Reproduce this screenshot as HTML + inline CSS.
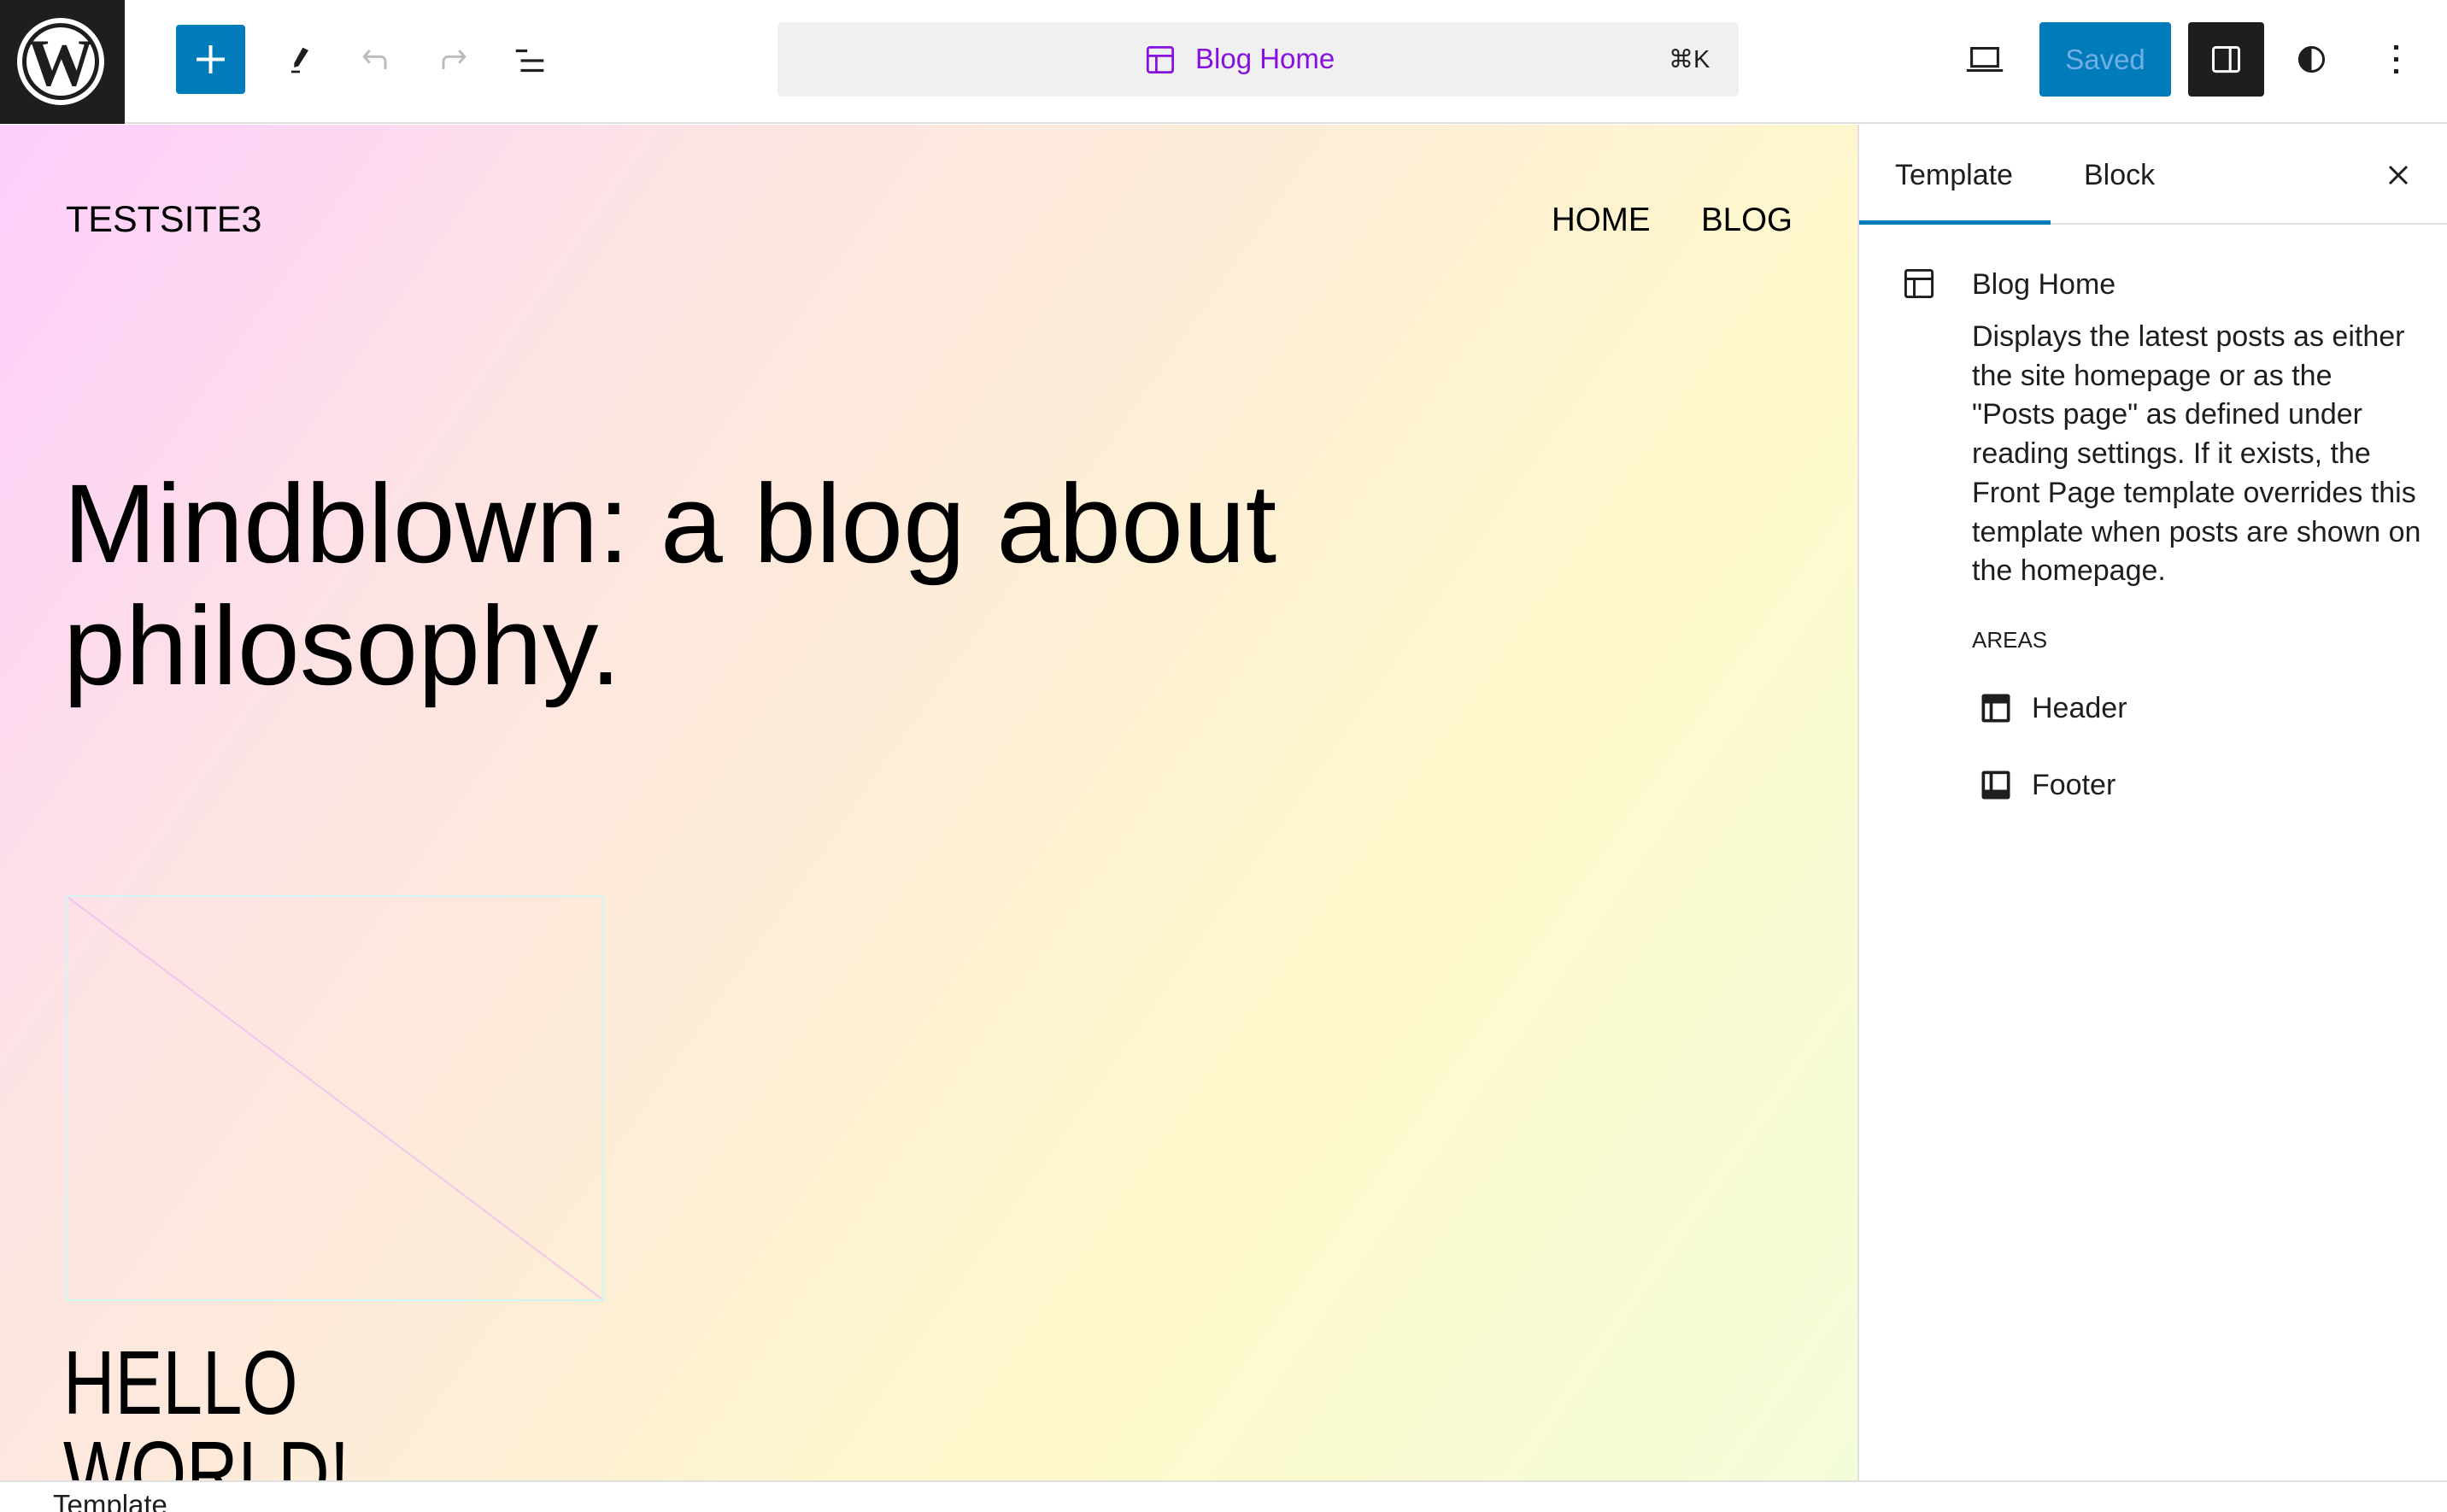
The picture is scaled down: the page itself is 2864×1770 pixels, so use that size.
<!DOCTYPE html>
<html><head><meta charset="utf-8"><style>
*{margin:0;padding:0;box-sizing:border-box}
body{width:2864px;height:1770px;overflow:hidden;background:#fff;font-family:"Liberation Sans",sans-serif;color:#1e1e1e;position:relative}
.abs{position:absolute}
#top{left:0;top:0;width:2864px;height:145px;background:#fff;border-bottom:2px solid #e0e0e0}
#logo{left:0;top:0;width:146px;height:145px;background:#1e1e1e}
#canvas{left:0;top:146px;width:2174px;height:1587px;overflow:hidden;background:linear-gradient(125deg,#fdcdfd 0%,#fde3e4 25%,#fdecd8 45%,#fef9cb 70%,#f3fcd9 100%)}
#side{left:2174px;top:146px;width:690px;height:1587px;background:#fff;border-left:2px solid #e0e0e0}
#bottom{left:0;top:1733px;width:2864px;height:37px;background:#fff;border-top:2px solid #e0e0e0;overflow:hidden}
.d{white-space:nowrap}
</style></head><body>
<div id="top" class="abs"></div>
<div id="logo" class="abs">
<svg width="146" height="145" viewBox="0 0 146 145"><circle cx="71" cy="72" r="48" fill="none" stroke="#fff" stroke-width="6"/><circle cx="71" cy="72" r="40" fill="#fff"/><text x="71" y="100" font-family="Liberation Serif" font-size="78" font-weight="bold" fill="#1e1e1e" text-anchor="middle">W</text></svg>
</div>
<div class="abs" style="left:206px;top:29px;width:81px;height:81px;background:#007cba;border-radius:4px"></div>
<svg class="abs" style="left:206px;top:29px" width="81" height="81"><path d="M40.5 24v33M24 40.5h33" stroke="#fff" stroke-width="4"/></svg>
<svg class="abs" style="left:331px;top:49px" width="40" height="40" viewBox="0 0 24 24"><path d="M14 4l4 2-7 11-3 1 0-3z" fill="#1e1e1e"/><path d="M6 21h6" stroke="#1e1e1e" stroke-width="1.6"/></svg>
<svg class="abs" style="left:418px;top:48px" width="44" height="44" viewBox="0 0 24 24" fill="none" stroke="#bbb" stroke-width="1.6"><path d="M8 6L4.5 10 8 14M4.5 10H15a3 3 0 013 3v5"/></svg>
<svg class="abs" style="left:508px;top:48px" width="44" height="44" viewBox="0 0 24 24" fill="none" stroke="#bbb" stroke-width="1.6"><path d="M16 6l3.5 4L16 14M19.5 10H9a3 3 0 00-3 3v5"/></svg>
<svg class="abs" style="left:598px;top:48px" width="46" height="46" viewBox="0 0 24 24" stroke="#1e1e1e" stroke-width="1.7"><path d="M3 6h7M6 12h14M6 18h14"/></svg>
<div class="abs" style="left:910px;top:26px;width:1125px;height:87px;background:#f0f0f0;border-radius:6px"></div>
<svg class="abs" style="left:1336px;top:48px" width="44" height="44" viewBox="0 0 24 24" fill="none" stroke="#8710e0" stroke-width="1.5"><rect x="4" y="4" width="16" height="16" rx="1.5"/><path d="M4 9.5h16M9.5 9.5V20"/></svg>
<div class="abs" style="left:1399px;top:50px;font-size:33px;color:#8710e0">Blog Home</div>
<div class="abs" style="left:1953px;top:52px;font-size:29px;color:#1e1e1e">⌘K</div>
<svg class="abs" style="left:2298px;top:48px" width="50" height="44" viewBox="0 0 26 22" fill="none" stroke="#1e1e1e" stroke-width="1.6"><rect x="5" y="4" width="16" height="11"/><path d="M2 17.5h22"/></svg>
<div class="abs" style="left:2387px;top:26px;width:154px;height:87px;background:#007cba;border-radius:4px;color:#72aee6;font-size:33px;text-align:center;line-height:87px">Saved</div>
<div class="abs" style="left:2561px;top:26px;width:89px;height:87px;background:#1e1e1e;border-radius:4px"></div>
<svg class="abs" style="left:2583px;top:47px" width="45" height="45" viewBox="0 0 24 24" fill="none" stroke="#fff" stroke-width="1.6"><rect x="4" y="4.5" width="16" height="15" rx="1.5"/><path d="M14.5 4.5v15"/></svg>
<svg class="abs" style="left:2683px;top:47px" width="45" height="45" viewBox="0 0 24 24"><circle cx="12" cy="12" r="7.5" fill="none" stroke="#1e1e1e" stroke-width="1.6"/><path d="M12 4.5a7.5 7.5 0 000 15z" fill="#1e1e1e"/></svg>
<svg class="abs" style="left:2795px;top:47px" width="20" height="45"><rect x="7" y="6" width="5" height="5" fill="#1e1e1e"/><rect x="7" y="20" width="5" height="5" fill="#1e1e1e"/><rect x="7" y="34" width="5" height="5" fill="#1e1e1e"/></svg>

<div id="canvas" class="abs">
<div class="abs" style="left:77px;top:87px;font-size:43px;color:#000">TESTSITE3</div>
<div class="abs" style="left:1816px;top:90px;font-size:38.5px;color:#000">HOME</div>
<div class="abs" style="left:1991px;top:90px;font-size:38.5px;color:#000">BLOG</div>
<div class="abs" style="left:74px;top:395px;font-size:131px;line-height:143px;color:#000;white-space:nowrap">Mindblown: a blog about<br>philosophy.</div>
<div class="abs" style="left:77px;top:902px;width:630px;height:475px;border:2px solid #d2f6f6"><svg width="626" height="471" class="abs" style="left:0;top:0"><path d="M0 0L626 471" stroke="#f3c5ee" stroke-width="2"/></svg></div>
<div class="abs" style="left:74px;top:1420px;font-size:106px;line-height:106px;color:#000;transform:scaleX(0.79);transform-origin:left top">HELLO<br>WORLD!</div>
</div>

<div id="side" class="abs">
<div class="abs" style="left:42px;top:40px;font-size:34px">Template</div>
<div class="abs" style="left:263px;top:40px;font-size:34px">Block</div>
<svg class="abs" style="left:616px;top:44px" width="30" height="30"><path d="M5 5L25 25M25 5L5 25" stroke="#1e1e1e" stroke-width="3"/></svg>
<div class="abs" style="left:0;top:115px;width:690px;height:2px;background:#e0e0e0"></div>
<div class="abs" style="left:0;top:112px;width:224px;height:5px;background:#007cba"></div>
<svg class="abs" style="left:48px;top:164px" width="44" height="44" viewBox="0 0 24 24" fill="none" stroke="#1e1e1e" stroke-width="1.6"><rect x="3.5" y="3.5" width="17" height="17" rx="1.2"/><path d="M3.5 9h17M9 9v11.5"/></svg>
<div class="abs" style="left:132px;top:168px;font-size:34px">Blog Home</div>
<div class="abs d" style="left:132px;top:226px;font-size:34px;line-height:45.7px;color:#1e1e1e">Displays the latest posts as either<br>the site homepage or as the<br>"Posts page" as defined under<br>reading settings. If it exists, the<br>Front Page template overrides this<br>template when posts are shown on<br>the homepage.</div>
<div class="abs" style="left:132px;top:588px;font-size:26px">AREAS</div>
<svg class="abs" style="left:138px;top:661px" width="44" height="44" viewBox="0 0 24 24"><rect x="3" y="3" width="18" height="18" rx="1.5" fill="#1e1e1e"/><rect x="5" y="9" width="3" height="10" fill="#fff"/><rect x="10" y="9" width="9" height="10" fill="#fff"/></svg>
<div class="abs" style="left:202px;top:664px;font-size:34px">Header</div>
<svg class="abs" style="left:138px;top:751px" width="44" height="44" viewBox="0 0 24 24"><rect x="3" y="3" width="18" height="18" rx="1.5" fill="#1e1e1e"/><rect x="5" y="5" width="3" height="10" fill="#fff"/><rect x="10" y="5" width="9" height="10" fill="#fff"/></svg>
<div class="abs" style="left:202px;top:754px;font-size:34px">Footer</div>
</div>

<div id="bottom" class="abs"><div class="abs" style="left:62px;top:8px;font-size:33px;color:#1e1e1e">Template</div></div>
</body></html>
